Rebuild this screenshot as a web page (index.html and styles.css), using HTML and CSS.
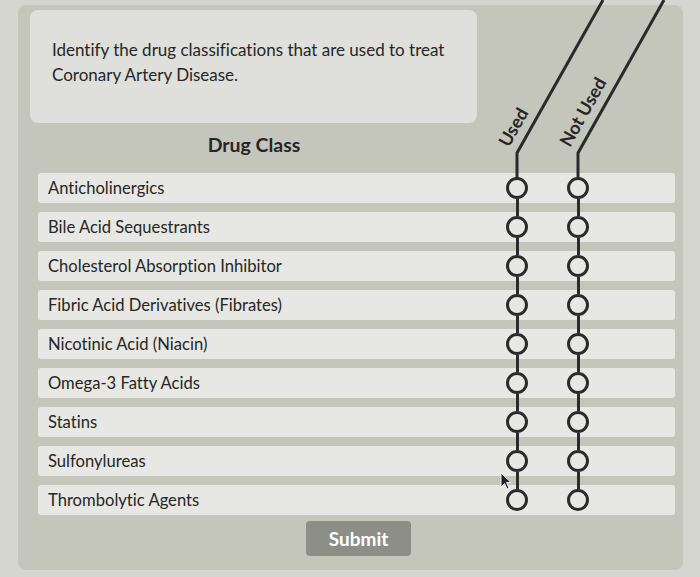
FILE: index.html
```html
<!DOCTYPE html>
<html>
<head>
<meta charset="utf-8">
<link rel="stylesheet" href="styles.css">
</head>
<body>
<div class="panel">
  <div class="question">
    <p>Identify the drug classifications that are used to treat<br>Coronary Artery Disease.</p>
  </div>
  <div class="head">Drug Class</div>
  <div class="rows">
    <div class="row"><span class="label">Anticholinergics</span><span class="radio"></span><span class="radio"></span></div>
    <div class="row"><span class="label">Bile Acid Sequestrants</span><span class="radio"></span><span class="radio"></span></div>
    <div class="row"><span class="label">Cholesterol Absorption Inhibitor</span><span class="radio"></span><span class="radio"></span></div>
    <div class="row"><span class="label">Fibric Acid Derivatives (Fibrates)</span><span class="radio"></span><span class="radio"></span></div>
    <div class="row"><span class="label">Nicotinic Acid (Niacin)</span><span class="radio"></span><span class="radio"></span></div>
    <div class="row"><span class="label">Omega-3 Fatty Acids</span><span class="radio"></span><span class="radio"></span></div>
    <div class="row"><span class="label">Statins</span><span class="radio"></span><span class="radio"></span></div>
    <div class="row"><span class="label">Sulfonylureas</span><span class="radio"></span><span class="radio"></span></div>
    <div class="row last"><span class="label">Thrombolytic Agents</span><span class="radio"></span><span class="radio"></span></div>
  </div>
  <div class="actions"><button class="submit">Submit</button></div>
</div>
<svg class="columns" width="700" height="180" viewBox="0 0 700 180">
  <polyline points="517,178 517,153 603,0" fill="none" stroke="#2b2b2b" stroke-width="3"/>
  <polyline points="578,178 578,153 664,0" fill="none" stroke="#2b2b2b" stroke-width="3"/>
  <text x="509" y="148" transform="rotate(-60.7 509 148)" class="col-label">Used</text>
  <text x="570" y="148" transform="rotate(-60.7 570 148)" class="col-label">Not Used</text>
</svg>
<svg class="cursor" width="14" height="20" viewBox="0 0 14 20">
  <path d="M1 1 L1 15 L4.5 11.5 L7 17 L9 16 L6.5 10.5 L11 10.5 Z" fill="#222" stroke="#eee" stroke-width="1"/>
</svg>
</body>
</html>
```
FILE: styles.css
```css
html, body {
  margin: 0;
  padding: 0;
}
body {
  width: 700px;
  height: 577px;
  background: #d5d6d0;
  font-family: Lato, "Open Sans", sans-serif;
  font-variant-ligatures: none;
  color: #262626;
  position: relative;
  overflow: hidden;
}
.panel {
  margin: 5px 0 0 18px;
  width: 665px;
  height: 565px;
  background: #c4c6bc;
  border-radius: 8px;
  box-sizing: border-box;
  padding: 5px 0 0 12px;
}
.question {
  width: 447px;
  height: 113px;
  background: #dfe0db;
  border-radius: 8px;
  box-sizing: border-box;
  padding: 27px 0 0 22px;
}
.question p {
  margin: 0;
  font-size: 17px;
  line-height: 25px;
}
.head {
  width: 448px;
  text-align: center;
  font-weight: bold;
  font-size: 19.5px;
  height: 50px;
  line-height: 44px;
}
.rows {
  margin-left: 8px;
  width: 637px;
  display: flex;
  flex-direction: column;
  gap: 9px;
}
.row {
  height: 30px;
  background: #e7e8e4;
  border-radius: 3px;
  display: flex;
  align-items: center;
  padding-left: 10px;
  padding-right: 86px;
}
.label {
  flex: 1;
  font-size: 16.6px;
}
.radio {
  width: 22px;
  height: 22px;
  box-sizing: border-box;
  border: 3px solid #2b2b2b;
  border-radius: 50%;
  position: relative;
}
.radio + .radio {
  margin-left: 39px;
}
.radio::after {
  content: "";
  position: absolute;
  left: 6.5px;
  top: 19px;
  width: 3px;
  height: 17px;
  background: #2b2b2b;
}
.last .radio::after {
  display: none;
}
.actions {
  display: flex;
  padding-top: 6px;
  padding-left: 276px;
}
.submit {
  width: 105px;
  height: 35px;
  background: #8d8f87;
  color: #fff;
  border: none;
  border-radius: 4px;
  font-family: Lato, "Open Sans", sans-serif;
  font-weight: bold;
  font-size: 19px;
  padding: 0;
}
.columns {
  position: absolute;
  left: 0;
  top: 0;
}
.col-label {
  font-family: Lato, "Open Sans", sans-serif;
  font-weight: bold;
  font-size: 18px;
  fill: #262626;
}
.cursor {
  position: absolute;
  left: 500px;
  top: 472px;
}
```
